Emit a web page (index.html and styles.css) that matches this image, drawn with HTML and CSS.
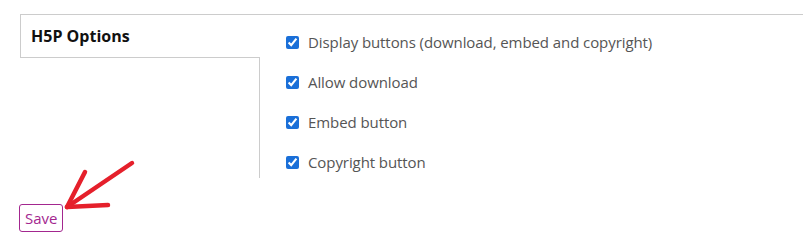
FILE: index.html
```html
<!DOCTYPE html>
<html lang="en">
<head>
    <meta charset="UTF-8">
    <title>H5P Options</title>
    <link rel="stylesheet" href="styles.css">
</head>
<body>
    <div class="page">
        <div class="vertical-tabs">
            <div class="tab-list">
                <div class="tab active">H5P Options</div>
                <div class="tab-fill"></div>
            </div>
            <div class="tab-pane">
                <label class="option"><input type="checkbox" checked> Display buttons (download, embed and copyright)</label>
                <label class="option"><input type="checkbox" checked> Allow download</label>
                <label class="option"><input type="checkbox" checked> Embed button</label>
                <label class="option"><input type="checkbox" checked> Copyright button</label>
            </div>
        </div>
        <div class="actions">
            <button type="submit" class="btn-save">Save</button>
        </div>
    </div>

    <svg class="arrow" width="803" height="243" viewBox="0 0 803 243">
        <g stroke="#e5202b" stroke-width="4.5" stroke-linecap="round" fill="none">
            <path d="M132 163 L67 207"/>
            <path d="M67 207 L85 172"/>
            <path d="M67 207 L108 205"/>
        </g>
    </svg>
</body>
</html>
```

FILE: styles.css
```css
* {
    margin: 0;
    padding: 0;
    box-sizing: border-box;
}

body {
    font-family: 'Open Sans', sans-serif;
    background: #ffffff;
    color: #555555;
    position: relative;
    width: 803px;
    height: 243px;
    overflow: hidden;
}

.page {
    padding: 14px 0 0 20px;
}

.vertical-tabs {
    display: flex;
    border-top: 1px solid #cccccc;
    height: 164px;
}

.tab-list {
    width: 240px;
    display: flex;
    flex-direction: column;
}

.tab {
    height: 43px;
    padding: 0 10px;
    display: flex;
    align-items: center;
    border-left: 1px solid #cccccc;
    border-bottom: 1px solid #cccccc;
    font-weight: bold;
    font-size: 16px;
    color: #111111;
}

.tab-fill {
    flex: 1;
    border-right: 1px solid #cccccc;
}

.tab-pane {
    padding: 17px 0 0 26px;
    display: flex;
    flex-direction: column;
    gap: 19px;
}

.option {
    display: flex;
    align-items: center;
    gap: 9px;
    font-size: 15px;
    line-height: 21px;
    letter-spacing: -0.08px;
    color: #555555;
}

.option input {
    width: 13px;
    height: 13px;
    accent-color: #1a6fd8;
}

.actions {
    margin-top: 26px;
}

.btn-save {
    font-family: 'Open Sans', sans-serif;
    font-size: 15px;
    color: #a3278f;
    background: #ffffff;
    border: 1px solid #a3278f;
    border-radius: 3px;
    padding: 0 5px;
    margin-left: -1px;
    height: 28px;
}

.arrow {
    position: absolute;
    left: 0;
    top: 0;
    pointer-events: none;
}
```
